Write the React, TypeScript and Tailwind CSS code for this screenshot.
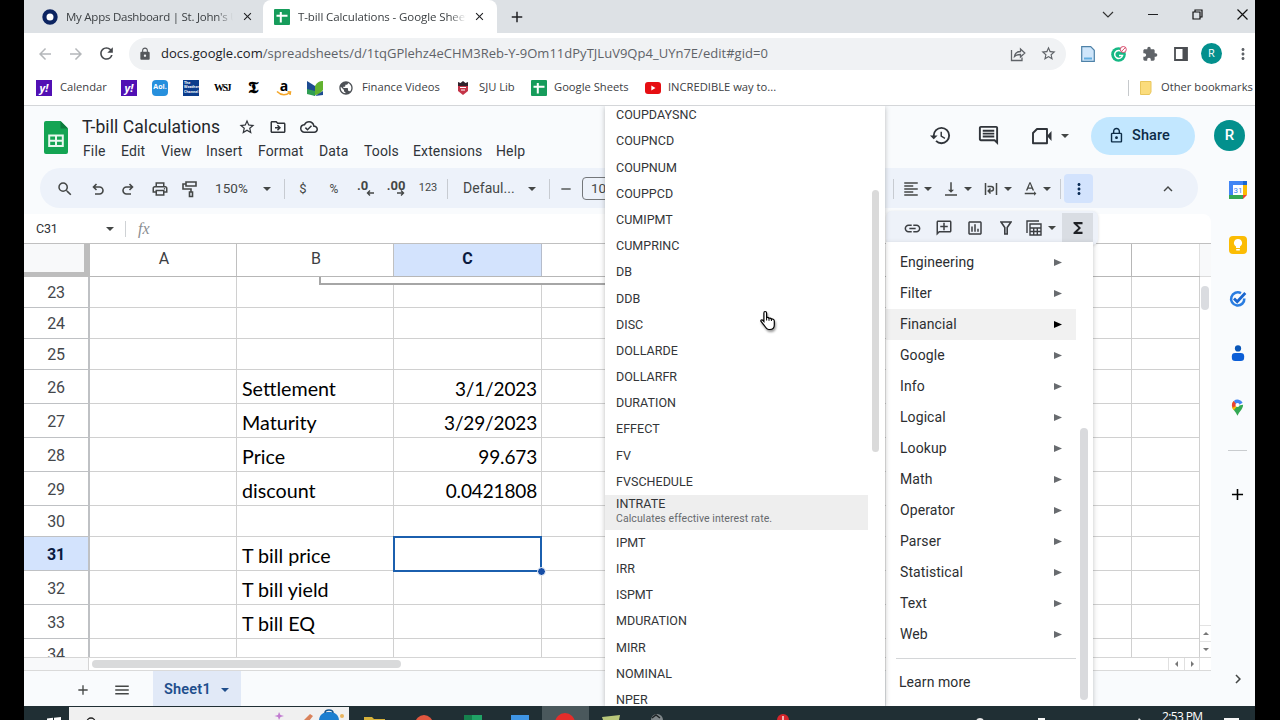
import type { ReactNode } from "react";
import {
  MdAdd,
  MdArrowBack,
  MdArrowForward,
  MdClose,
  MdExtension,
  MdFormatAlignLeft,
  MdFunctions,
  MdHistory,
  MdKeyboardArrowDown,
  MdKeyboardArrowRight,
  MdKeyboardArrowUp,
  MdLink,
  MdLock,
  MdMenu,
  MdMoreVert,
  MdOutlineAddComment,
  MdOutlineAssessment,
  MdOutlineCloudDone,
  MdOutlineComment,
  MdOutlineDriveFileMove,
  MdOutlineLock,
  MdOutlinePrint,
  MdPublic,
  MdRefresh,
  MdRemove,
  MdSearch,
  MdStarBorder,
  MdTextRotationNone,
  MdVerticalAlignBottom,
} from "react-icons/md";

const menus = [
  { label: "File", width: "w-[38px]" },
  { label: "Edit", width: "w-[40px]" },
  { label: "View", width: "w-[45px]" },
  { label: "Insert", width: "w-[52px]" },
  { label: "Format", width: "w-[61px]" },
  { label: "Data", width: "w-[45px]" },
  { label: "Tools", width: "w-[49px]" },
  { label: "Extensions", width: "w-[83px]" },
  { label: "Help", width: "w-[40px]" },
];

const rows = [
  { n: 23, h: "h-[31px]" },
  { n: 24, h: "h-[31px]" },
  { n: 25, h: "h-[31px]" },
  { n: 26, h: "h-[34px]", b: "Settlement", c: "3/1/2023" },
  { n: 27, h: "h-[34px]", b: "Maturity", c: "3/29/2023" },
  { n: 28, h: "h-[34px]", b: "Price", c: "99.673" },
  { n: 29, h: "h-[34px]", b: "discount", c: "0.0421808" },
  { n: 30, h: "h-[31px]" },
  { n: 31, h: "h-[34px]", b: "T bill price", active: true },
  { n: 32, h: "h-[34px]", b: "T bill yield" },
  { n: 33, h: "h-[34px]", b: "T bill EQ" },
  { n: 34, h: "h-[31px]" },
];

const functionsAbove = [
  "COUPDAYSNC",
  "COUPNCD",
  "COUPNUM",
  "COUPPCD",
  "CUMIPMT",
  "CUMPRINC",
  "DB",
  "DDB",
  "DISC",
  "DOLLARDE",
  "DOLLARFR",
  "DURATION",
  "EFFECT",
  "FV",
  "FVSCHEDULE",
];

const functionsBelow = ["IPMT", "IRR", "ISPMT", "MDURATION", "MIRR", "NOMINAL", "NPER"];

const categories = [
  "Engineering",
  "Filter",
  "Financial",
  "Google",
  "Info",
  "Logical",
  "Lookup",
  "Math",
  "Operator",
  "Parser",
  "Statistical",
  "Text",
  "Web",
];

function Slot({ w, children }: { w: string; children: ReactNode }) {
  return <div className={`flex shrink-0 items-center justify-center ${w}`}>{children}</div>;
}

function Caret({ className = "text-[#444746]" }: { className?: string }) {
  return (
    <svg viewBox="0 0 8 4" className={`h-1 w-2 shrink-0 ${className}`}>
      <path d="M0 0h8L4 4z" fill="currentColor" />
    </svg>
  );
}

function Divider() {
  return <div className="h-5 w-px shrink-0 bg-[#c7cbd1]" />;
}

function SheetsFavicon() {
  return (
    <svg viewBox="0 0 16 16" className="size-4 shrink-0">
      <rect width="16" height="16" rx="1" fill="#169c5b" />
      <path d="M2.5 6.7h11M6.8 3v10.5" stroke="#fff" strokeWidth="2" />
    </svg>
  );
}

function YahooIcon() {
  return (
    <div className="flex size-4 shrink-0 items-center justify-center bg-[#5110b4] text-[11px] leading-none font-bold text-white italic">
      y!
    </div>
  );
}

function TabStrip() {
  return (
    <div className="flex h-[33px] shrink-0 bg-[#dde1e5] text-[11.500px] text-[#3c4043]">
      <div className="flex w-[239px] items-center pl-[18px]">
        <svg viewBox="0 0 16 16" className="size-4 shrink-0">
          <circle cx="8" cy="8" r="5.600" fill="#fff" stroke="#0c2461" strokeWidth="4.200" />
        </svg>
        <div className="ml-2 w-[167px] overflow-hidden mask-r-from-90% tracking-[-0.250px] whitespace-nowrap">
          My Apps Dashboard | St. John's U
        </div>
        <MdClose className="ml-2 size-[13px] text-[#202124]" />
      </div>
      <div className="flex w-[234px] items-center rounded-t-lg bg-white pl-[11px]">
        <SheetsFavicon />
        <div className="ml-2 w-[168px] overflow-hidden mask-r-from-90% tracking-[-0.100px] whitespace-nowrap">
          T-bill Calculations - Google Sheets
        </div>
        <MdClose className="ml-[7px] size-[13px] text-[#202124]" />
      </div>
      <div className="flex flex-1 items-center text-[#202124]">
        <MdAdd className="ml-[11px] size-[18px]" />
        <div className="flex-1" />
        <Slot w="w-[45px] pb-1">
          <svg viewBox="0 0 12 7" className="h-[7px] w-3" fill="none" stroke="#333" strokeWidth="1.200">
            <path d="M1 1l5 5 5-5" />
          </svg>
        </Slot>
        <Slot w="w-[45px] pb-1">
          <div className="h-px w-[10px] bg-[#202124]" />
        </Slot>
        <Slot w="w-[45px] pb-1">
          <svg viewBox="0 0 11 11" className="size-[11px]" fill="none" stroke="#111" strokeWidth="1.200">
            <path d="M1 3h7v7H1zM3 3V1h7v7H8" />
          </svg>
        </Slot>
        <Slot w="w-[35px] pb-1 pl-[9px]">
          <svg viewBox="0 0 11 11" className="size-[11px]" stroke="#111" strokeWidth="1.200">
            <path d="M.5.5l10 10M10.500.5l-10 10" />
          </svg>
        </Slot>
      </div>
    </div>
  );
}

function AddressBar() {
  return (
    <div className="flex h-[37px] shrink-0 items-center bg-white pt-1 pl-[5px] text-[#5f6368]">
      <Slot w="w-[31px]">
        <MdArrowBack className="size-[18px] text-[#b4b7ba]" />
      </Slot>
      <Slot w="w-[31px]">
        <MdArrowForward className="size-[18px] text-[#b4b7ba]" />
      </Slot>
      <Slot w="w-[31px]">
        <MdRefresh className="size-[19px] text-[#46494d]" />
      </Slot>
      <div className="ml-[7px] flex h-8 w-[937px] shrink-0 items-center rounded-full bg-[#f0f2f4] pl-[9px]">
        <MdLock className="size-[14px] text-[#55585c]" />
        <div className="ml-[9px] w-[620px] text-[13px] tracking-[0.020px] whitespace-nowrap">
          <span className="text-[#202124]">docs.google.com</span>
          /spreadsheets/d/1tqGPlehz4eCHM3Reb-Y-9Om11dPyTJLuV9Qp4_UYn7E/edit#gid=0
        </div>
        <div className="flex-1" />
        <Slot w="w-[31px]">
          <svg viewBox="0 0 16 16" className="size-4" fill="none" stroke="#5f6368" strokeWidth="1.300">
            <path d="M1.500 4v10.500h10.500v-3M4.500 10.500c.5-3.500 2.500-5 6-5V3l4.300 4-4.300 4V8.500c-3 0-4.500.5-6 2z" />
          </svg>
        </Slot>
        <Slot w="w-[31px]">
          <MdStarBorder className="size-[17px]" />
        </Slot>
        <div className="w-[2px]" />
      </div>
      <div className="w-[6px] shrink-0" />
      <Slot w="w-[31px]">
        <svg viewBox="0 0 14 16" className="h-4 w-[14px]">
          <path d="M.7.7h9l3.600 3.600v11H.7z" fill="#cfe6fb" stroke="#4e82a8" strokeWidth="1.200" />
          <path d="M3 12.500h8" stroke="#62aee0" strokeWidth="2" />
        </svg>
      </Slot>
      <Slot w="w-[31px]">
        <svg viewBox="0 0 16 16" className="size-4">
          <circle cx="7.500" cy="8.500" r="7.300" fill="#15b884" />
          <path d="M10.500 5.600a4 4 0 1 0 1 4H8" fill="none" stroke="#fff" strokeWidth="1.500" />
          <circle cx="12.300" cy="3.500" r="3" fill="#fff" stroke="#d9486a" />
          <path d="M10.400 5.500l4-4" stroke="#d9486a" />
        </svg>
      </Slot>
      <Slot w="w-[31px]">
        <MdExtension className="size-4" />
      </Slot>
      <Slot w="w-[31px]">
        <svg viewBox="0 0 14 14" className="size-[14px]">
          <path d="M1 1h12v12H1z" fill="#fff" stroke="#4b4e52" strokeWidth="1.800" />
          <path d="M8.500 1H13v12H8.500z" fill="#4b4e52" />
        </svg>
      </Slot>
      <Slot w="w-[31px]">
        <div className="flex size-[21px] items-center justify-center rounded-full bg-[#03908d] text-[11px] text-white">
          R
        </div>
      </Slot>
      <Slot w="w-[31px]">
        <MdMoreVert className="size-[18px]" />
      </Slot>
    </div>
  );
}

function BookmarksBar() {
  return (
    <div className="flex h-9 shrink-0 items-center border-b border-[#d4d6d9] bg-white pl-3 text-[11.200px] whitespace-nowrap text-[#3c4043]">
      <YahooIcon />
      <div className="ml-2 w-[61px]">Calendar</div>
      <YahooIcon />
      <div className="ml-[15px] flex size-4 shrink-0 items-center justify-center rounded-sm bg-[#2790dd] text-[7px] font-bold text-white">
        Aol.
      </div>
      <div className="ml-[15px] flex size-4 shrink-0 flex-col justify-center bg-[#0b3c8c] pl-px text-[3.500px] leading-[4.500px] font-bold text-white">
        <span>The</span>
        <span>Weather</span>
        <span>Channel</span>
      </div>
      <div className="ml-[15px] w-4 font-['Liberation_Serif',serif] text-[10px] font-bold tracking-[-1.500px] text-black">
        WSJ
      </div>
      <div className="ml-[15px] w-4 text-center font-['Liberation_Serif',serif] text-[17px] leading-none font-bold text-black">
        𝕿
      </div>
      <div className="ml-[15px] flex w-4 flex-col items-center font-['Open_Sans',sans-serif] text-[14px] leading-[11px] font-bold text-black">
        a
        <svg viewBox="0 0 16 5" className="h-[5px] w-4" fill="none" stroke="#f4a629" strokeWidth="1.500">
          <path d="M1 .5c4 4 9 4 13 1M11.500.8l3 .2-.5 3" />
        </svg>
      </div>
      <svg viewBox="0 0 16 16" className="ml-[15px] size-4 shrink-0">
        <path d="M0 1l8 5v10L0 11z" fill="#1d4c92" />
        <path d="M0 9l8 2v5l-8-2z" fill="#2f9e54" />
        <path d="M8 6c2-4 5-5 8-5v9c-2 3-5 5-8 5z" fill="#62b22f" />
        <path d="M8 16l8-5v4z" fill="#1d4c92" />
      </svg>
      <MdPublic className="ml-[15px] size-4 shrink-0 text-[#4d5156]" />
      <div className="ml-2 w-[94px]">Finance Videos</div>
      <svg viewBox="0 0 14 14" className="size-[14px] shrink-0">
        <path d="M2 1l2.500 1L7 0l2.500 2L12 1v4H2z" fill="#30222b" />
        <path d="M2 5h10v5l-5 4-5-4z" fill="#c43347" />
        <path d="M4 6.500h6M5 9h4" stroke="#fff" />
      </svg>
      <div className="ml-[9px] w-[52px]">SJU Lib</div>
      <SheetsFavicon />
      <div className="ml-[7px] w-[91px]">Google Sheets</div>
      <svg viewBox="0 0 16 12" className="h-3 w-4 shrink-0">
        <rect width="16" height="12" rx="3" fill="#e60e12" />
        <path d="M6.300 3.500L10.500 6l-4.200 2.500z" fill="#fff" />
      </svg>
      <div className="ml-[7px]">INCREDIBLE way to...</div>
      <div className="flex-1" />
      <div className="h-4 w-px bg-[#c6c9cc]" />
      <svg viewBox="0 0 12 14" className="ml-[11px] h-[14px] w-3">
        <path d="M.5.5h10.500V11l-1.500 2.500H.5z" fill="#fbdc7c" stroke="#e9c65c" />
      </svg>
      <div className="ml-[9px] w-[94px]">Other bookmarks</div>
    </div>
  );
}

function DocHeader() {
  return (
    <div className="flex h-[62px] shrink-0 pl-5 text-[#30343a]">
      <svg viewBox="0 0 24 33" className="mt-[15px] h-[33px] w-6">
        <path d="M2 0h14.500L24 7.500V31a2 2 0 0 1-2 2H2a2 2 0 0 1-2-2V2a2 2 0 0 1 2-2z" fill="#14a453" />
        <path d="M16.500 0L24 7.500h-7.500z" fill="#0c7b3d" />
        <path d="M5.200 14.600h13.600v10.300H5.200zM12 14.600v10.300M5.200 19.700h13.600" fill="none" stroke="#e8f7ee" strokeWidth="2" />
      </svg>
      <div className="ml-[14px] flex w-[480px] flex-col pt-[9px]">
        <div className="flex h-6 items-center">
          <div className="w-[156px] text-[17.500px] tracking-[0.080px] whitespace-nowrap text-[#24272b]">
            T-bill Calculations
          </div>
          <MdStarBorder className="size-[18px]" />
          <MdOutlineDriveFileMove className="ml-[13px] size-[18px]" />
          <MdOutlineCloudDone className="ml-[13px] size-[18px]" />
        </div>
        <div className="flex h-6 items-center pl-px text-[14px] tracking-[0.120px]">
          {menus.map((m) => (
            <div key={m.label} className={`shrink-0 ${m.width}`}>
              {m.label}
            </div>
          ))}
        </div>
      </div>
      <div className="flex-1" />
      <div className="flex h-[59px] items-center">
        <MdHistory className="size-[23px]" />
        <MdOutlineComment className="ml-[25px] size-[23px]" />
        <svg viewBox="0 0 22 20" className="ml-[31px] h-5 w-[22px]" fill="none" stroke="currentColor" strokeWidth="1.900">
          <path d="M6 3h10v14.200H2V7z" strokeLinejoin="round" />
          <path d="M16 10l4.500-5v10z" fill="currentColor" strokeWidth="0" />
        </svg>
        <div className="w-2" />
        <Caret />
        <div className="ml-[22px] flex h-[38px] w-[104px] items-center rounded-full bg-[#c2e7ff] pl-[17px] text-[#0c2c47]">
          <MdOutlineLock className="size-[17px]" />
          <span className="ml-[7px] text-[14.500px] font-medium tracking-[0.100px]">Share</span>
        </div>
        <div className="ml-[19px] flex size-[31px] items-center justify-center rounded-full bg-[#03908d] text-[15px] font-medium text-white">
          R
        </div>
        <div className="w-[10px]" />
      </div>
    </div>
  );
}

function Toolbar() {
  return (
    <div className="ml-4 flex h-10 w-[1158px] shrink-0 items-center rounded-full bg-[#edf2fa] pt-px text-[13.500px] text-[#444746]">
      <div className="w-[9px]" />
      <Slot w="w-8">
        <MdSearch className="size-[18px]" />
      </Slot>
      <Slot w="w-[34px]">
        <svg viewBox="0 0 12 12" className="size-3" fill="none" stroke="currentColor" strokeWidth="1.600">
          <path d="M4.500 1L1.500 4l3 3M1.500 4h6a3.200 3.200 0 0 1 0 7H3" />
        </svg>
      </Slot>
      <Slot w="w-[26px]">
        <svg viewBox="0 0 12 12" className="size-3" fill="none" stroke="currentColor" strokeWidth="1.600">
          <path d="M7.500 1l3 3-3 3M10.500 4h-6a3.200 3.200 0 0 0 0 7H9" />
        </svg>
      </Slot>
      <Slot w="w-[37px]">
        <MdOutlinePrint className="size-[18px]" />
      </Slot>
      <Slot w="w-6">
        <svg viewBox="0 0 16 18" className="h-[18px] w-4" fill="none" stroke="currentColor" strokeWidth="1.600">
          <path d="M4 2h10v4H4zM4 4H1v5h8v3M7.500 12h3v4.500h-3z" />
        </svg>
      </Slot>
      <div className="ml-[13px] w-[35px] tracking-[0.100px]">150%</div>
      <Slot w="w-[34px]">
        <Caret />
      </Slot>
      <Divider />
      <Slot w="w-9">
        <span className="text-[13px]">$</span>
      </Slot>
      <Slot w="w-[26px]">
        <span className="text-[12px]">%</span>
      </Slot>
      <Slot w="w-9">
        <div className="mr-[5px] flex flex-col items-end text-[13px] leading-[9px] font-bold">
          .0
          <svg viewBox="0 0 8 6" className="-mr-1.5 h-1.5 w-2" fill="none" stroke="currentColor" strokeWidth="1.400">
            <path d="M8 3H1.500M4 .5L1.500 3 4 5.500" />
          </svg>
        </div>
      </Slot>
      <Slot w="w-[26px]">
        <div className="flex flex-col items-end text-[13px] leading-[9px] font-bold">
          .00
          <svg viewBox="0 0 8 6" className="h-1.5 w-2" fill="none" stroke="currentColor" strokeWidth="1.400">
            <path d="M0 3h6.500M4 .5L6.500 3 4 5.500" />
          </svg>
        </div>
      </Slot>
      <Slot w="w-[38px]">
        <span className="text-[11px]">123</span>
      </Slot>
      <Divider />
      <div className="ml-[15px] w-[52px] text-[14px] tracking-[0.050px]">Defaul...</div>
      <Slot w="w-[34px]">
        <Caret />
      </Slot>
      <Divider />
      <Slot w="w-8">
        <MdRemove className="size-4" />
      </Slot>
      <div className="flex h-[23px] w-10 items-center rounded-sm border border-[#74777a] pl-2">10</div>
      <div className="flex-1" />
      <Divider />
      <div className="ml-[7px] flex">
        {[
          <MdFormatAlignLeft className="size-[18px]" />,
          <MdVerticalAlignBottom className="size-[18px]" />,
          <svg viewBox="0 0 14 14" className="size-[14px]" fill="none" stroke="currentColor" strokeWidth="1.500">
            <path d="M1.500 1v12M12.500 1v12M3.500 4.500h3.700a2.200 2.200 0 0 1 0 4.500H4.500M6.500 6.500L4.200 9l2.300 2.500" />
          </svg>,
          <MdTextRotationNone className="size-[18px]" />,
        ].map((icon, i) => (
          <div key={i} className="flex w-[39.700px] items-center">
            <Slot w="w-5">{icon}</Slot>
            <div className="w-[3px]" />
            <Caret />
          </div>
        ))}
      </div>
      <Divider />
      <div className="ml-[3px] flex h-[29px] w-[29px] items-center justify-center rounded-sm bg-[#d3e3fd]">
        <MdMoreVert className="size-[18px] text-[#0b2c55]" />
      </div>
      <MdKeyboardArrowUp className="mr-[21px] ml-[66px] size-[18px]" />
    </div>
  );
}

function FormulaBar() {
  return (
    <div className="mt-[6px] flex h-[29px] w-[1187px] shrink-0 items-center rounded-tr-lg bg-white pt-px pl-3 text-[12.500px] text-[#303236]">
      <div className="w-[70px] tracking-[-0.200px]">C31</div>
      <Caret />
      <div className="mr-3 ml-[11px] h-4 w-px bg-[#cfd2d5]" />
      <span className="font-['Liberation_Serif',serif] text-[16px] leading-none text-[#8b8e91] italic">fx</span>
    </div>
  );
}

function ColumnHeaders() {
  return (
    <div className="flex h-[34px] w-[1187px] shrink-0 border-t border-[#c0c0c0] bg-white text-[16px] text-[#3c4043]">
      <div className="h-full w-[66px] shrink-0 border-r-[6px] border-b-[5px] border-[#bdbdbd] bg-[#f8f9fa]" />
      <div className="flex w-[1110px] border-b border-[#b7b7b7]">
        <Slot w="w-[147px] border-r border-[#c0c0c0] pb-[3px] pl-0.5">A</Slot>
        <Slot w="w-[157px] border-r border-[#c0c0c0] pb-[3px] pl-0.5">B</Slot>
        <div className="flex w-[148px] items-center justify-center border-r border-[#b5bccb] bg-[#d3e3fd] pb-[3px] font-bold text-[#0a1a3f]">
          C
        </div>
        <div className="w-[590px] border-r border-[#b7b7b7]" />
        <div className="flex-1 border-r border-[#e0e0e0]" />
      </div>
      <div className="flex-1 border-b border-[#dcdcdc] bg-[#f8f9fa]" />
    </div>
  );
}

function Grid() {
  return (
    <div className="relative flex h-[381px] w-[1187px] shrink-0 overflow-hidden border-b border-[#d5d5d5] bg-white">
      <div className="w-[1176px]">
        {rows.map((r) => (
          <div key={r.n} className={`flex ${r.h}`}>
            <div
              className={`flex w-[66px] items-center justify-center border-r-2 border-b border-[#bfc1c4] pt-0.5 text-[16px] tracking-[-0.200px] ${
                r.active ? "bg-[#d3e3fd] font-bold text-[#0a1a3f]" : "text-[#44474b]"
              }`}
            >
              {r.n}
            </div>
            <div className="w-[147px] border-r border-b border-[#d0d0d0]" />
            <div className="flex w-[157px] items-end border-r border-b border-[#d0d0d0] pb-px pl-[5px] font-['Lato',sans-serif] text-[19.700px] leading-[27px] text-black">
              {r.b}
            </div>
            <div className="flex w-[148px] items-end justify-end border-r border-b border-[#d0d0d0] pr-1 pb-px font-['Lato',sans-serif] text-[19px] leading-[27px] tracking-[-0.150px] text-black">
              {r.c}
            </div>
            <div className="w-[590px] border-r border-b border-[#d0d0d0]" />
            <div className="flex-1 border-r border-b border-[#d0d0d0]" />
          </div>
        ))}
      </div>
      <div className="flex flex-1 flex-col items-center justify-between bg-white pt-[9px]">
        <div className="mr-px h-6 w-2 rounded-full bg-[#dadce0]" />
        <div className="flex w-full flex-col items-center text-[#777]">
          <div className="flex h-4 w-full items-center justify-center border-t border-[#e3e3e3]">
            <svg viewBox="0 0 6 3" className="h-[3px] w-1.5">
              <path d="M0 3h6L3 0z" fill="currentColor" />
            </svg>
          </div>
          <div className="flex h-4 w-full items-center justify-center border-t border-[#e3e3e3]">
            <svg viewBox="0 0 6 3" className="h-[3px] w-1.5">
              <path d="M0 0h6L3 3z" fill="currentColor" />
            </svg>
          </div>
        </div>
      </div>

      {/* bottom left corner of a chart floating over the cells */}
      <div className="absolute top-0 left-[295px] h-[8px] w-[320px] border-b-2 border-l-2 border-[#a6a6a6] bg-white" />

      {/* selected cell */}
      <div className="absolute top-[259px] left-[369px] h-[36px] w-[149px] border-2 border-[#1b5fae]">
        <div className="absolute -right-[6px] -bottom-[6px] size-[9px] rounded-full border border-white bg-[#174ea6]" />
      </div>
    </div>
  );
}

function SheetTabs() {
  return (
    <>
      <div className="flex h-[13px] w-[1187px] shrink-0 items-center border-b border-[#dadada] bg-white">
        <div className="h-full w-[65px] border-r border-[#d5d5d5] bg-[#f8f9fa]" />
        <div className="ml-[3px] h-2 w-[309px] rounded-full bg-[#d9dadb]" />
        <div className="flex-1" />
        <div className="flex h-3 w-4 items-center justify-center border-l border-[#e0e0e0]">
          <svg viewBox="0 0 3 6" className="h-1.5 w-[3px]">
            <path d="M3 0v6L0 3z" fill="#777" />
          </svg>
        </div>
        <div className="flex h-3 w-4 items-center justify-center border-x border-[#e0e0e0]">
          <svg viewBox="0 0 3 6" className="h-1.5 w-[3px]">
            <path d="M0 0v6l3-3z" fill="#777" />
          </svg>
        </div>
        <div className="w-[11px]" />
      </div>
      <div className="flex h-[35px] shrink-0 items-center pl-[51px] text-[#444746]">
        <MdAdd className="mt-0.5 size-4" />
        <MdMenu className="mt-0.5 ml-[22px] size-[18px]" />
        <div className="ml-[22px] flex h-full w-[88px] items-center bg-[#e1e9f7] pt-0.5 pl-[11px] text-[14.500px] font-semibold text-[#1f4e8c]">
          <div className="w-[57px] tracking-[0.200px]">Sheet1</div>
          <Caret className="text-[#1f4e8c]" />
        </div>
      </div>
    </>
  );
}

function SidePanel() {
  return (
    <div className="absolute top-[75px] right-0 flex w-[35px] flex-col items-center">
      <svg viewBox="0 0 18 18" className="h-[18px] w-[18px]">
        <path d="M0 0h14v4H4v10H0z" fill="#4285f4" />
        <path d="M14 0h4v4h-4z" fill="#1967d2" />
        <path d="M14 4h4v10h-4z" fill="#fbbc04" />
        <path d="M0 14h14v4H0z" fill="#34a853" />
        <path d="M14 14h4l-4 4z" fill="#ea4335" />
        <path d="M4 4h10v10H4z" fill="#fff" />
        <text x="9" y="12" textAnchor="middle" fontSize="8" fontFamily="Roboto" fill="#4285f4">
          31
        </text>
      </svg>
      <div className="mt-[37px] flex size-[18px] items-center justify-center rounded-sm bg-[#fbbc04]">
        <svg viewBox="0 0 10 12" className="h-3 w-[10px]">
          <path d="M5 0a4 4 0 0 1 2 7.500V9H3V7.500A4 4 0 0 1 5 0zM3.200 10h3.600v1.500H3.200z" fill="#fff" />
        </svg>
      </div>
      <svg viewBox="0 0 18 18" className="mt-9 size-[18px]" fill="none">
        <path d="M15.300 8.500A6.600 6.600 0 1 1 12 3.200" stroke="#2a7de1" strokeWidth="2.600" />
        <path d="M5 8.500l3.200 3.200L16.300 3" stroke="#1a66cf" strokeWidth="2.800" />
      </svg>
      <svg viewBox="0 0 14 18" className="mt-[37px] h-[17px] w-[14px]">
        <circle cx="7" cy="3.600" r="3.300" fill="#0b57b8" />
        <rect x=".5" y="8.500" width="13" height="8.500" rx="3.500" fill="#0b5ed7" />
      </svg>
      <svg viewBox="0 0 14 18" className="mt-[37px] h-[17px] w-[13px]">
        <path d="M7 18C5.500 13.500 1 11 1 6.500L7 7l6-1c0 5-4.500 7.500-6 12z" fill="#34a853" />
        <path d="M1 7a6 6 0 0 1 2-5l4 5-4 5C1.800 10.500 1 9 1 7z" fill="#fbbc04" />
        <path d="M1 6.500C1 4.500 1.800 3 3 2l4 4-4.500 3C1.500 8.500 1 7.500 1 6.500z" fill="#ea4335" />
        <path d="M3 2a6 6 0 0 1 9.500 2L7 7z" fill="#4285f4" />
        <circle cx="7" cy="6.300" r="2.200" fill="#fff" />
      </svg>
      <div className="mt-[34px] h-px w-[19px] bg-[#c9cccf]" />
      <MdAdd className="mt-[34px] size-[19px] text-black" />
      <MdKeyboardArrowRight className="mt-[166px] size-[18px] text-[#444746]" />
    </div>
  );
}

function OverflowToolbar() {
  return (
    <div className="absolute top-[105px] left-[862px] flex h-[34px] w-[212px] items-center rounded-md bg-[#eef2f9] text-[#3c3f43] shadow-[0_1px_3px_rgba(60,64,67,0.2)]">
      <div className="w-[10px]" />
      <Slot w="w-8">
        <MdLink className="size-[19px]" />
      </Slot>
      <Slot w="w-[31px]">
        <MdOutlineAddComment className="size-[18px] -scale-x-100" />
      </Slot>
      <Slot w="w-8">
        <MdOutlineAssessment className="size-[18px]" />
      </Slot>
      <Slot w="w-[29px]">
        <svg viewBox="0 0 12 14" className="h-[14px] w-3" fill="none" stroke="currentColor" strokeWidth="1.600">
          <path d="M1 1h10L7.200 6.500V13H4.800V6.500z" />
        </svg>
      </Slot>
      <Slot w="w-[28px]">
        <svg viewBox="0 0 16 16" className="size-4" fill="none" stroke="currentColor" strokeWidth="1.400">
          <path d="M4 4h11v11H4zM4 8h11M4 11.500h11M7.700 8v7M11.300 8v7M1 13V1h12" />
        </svg>
      </Slot>
      <Caret />
      <div className="ml-1.5 flex h-[30px] w-[31px] items-center justify-center bg-[#d9dde3]">
        <MdFunctions className="size-[18px] text-[#1f2125]" />
      </div>
    </div>
  );
}

function CategoryMenu() {
  return (
    <div className="absolute top-[136px] left-[862px] h-[464px] w-[207px] bg-white pt-[4.800px] text-[14px] tracking-[0.080px] text-[#2c2e31] shadow-[0_2px_5px_rgba(60,64,67,0.3)]">
      {categories.map((name) => {
        const open = name === "Financial";
        return (
          <div
            key={name}
            className={`flex h-[31.060px] w-[190px] items-center justify-between pr-[14px] pl-[14px] ${open ? "bg-[#f1f1f1]" : ""}`}
          >
            {name}
            <svg viewBox="0 0 8 7" className={`h-[7px] w-2 ${open ? "text-black" : "text-[#686b6f]"}`}>
              <path d="M0 0v7l8-3.500z" fill="currentColor" />
            </svg>
          </div>
        );
      })}
      <div className="mt-[8px] ml-[10px] h-px w-[180px] bg-[#d4d6d8]" />
      <div className="mt-[13px] pl-[13px]">Learn more</div>
      <div className="absolute top-[186px] right-[5px] h-[272px] w-2 rounded-full bg-[#d9dadd]" />
    </div>
  );
}

function FunctionMenu() {
  return (
    <div className="absolute top-0 left-[581px] h-[600px] w-[280px] overflow-hidden bg-white text-[12.500px] text-[#333538] shadow-[0_1px_5px_rgba(60,64,67,0.35)]">
      <div className="-mt-[3.400px]">
        {functionsAbove.map((name) => (
          <div key={name} className="flex h-[26.180px] items-center pl-[11px] tracking-[0.030px]">
            {name}
          </div>
        ))}
        <div className="flex h-[35px] w-[263px] flex-col bg-[#eee] pt-px pl-[11px]">
          <div className="leading-[16px]">INTRATE</div>
          <div className="text-[10.500px] leading-[14px] tracking-[0.080px] text-[#66696d]">
            Calculates effective interest rate.
          </div>
        </div>
        {functionsBelow.map((name) => (
          <div key={name} className="flex h-[26.180px] items-center pl-[11px] tracking-[0.030px]">
            {name}
          </div>
        ))}
      </div>
      <div className="absolute top-[84px] right-[6px] h-[262px] w-[7px] rounded-full bg-[#dadada]" />
    </div>
  );
}

function Pointer() {
  return (
    <svg viewBox="0 0 17 21" className="absolute top-[204px] left-[736px] h-[21px] w-[17px] drop-shadow-[1px_2px_1px_rgba(0,0,0,0.4)]">
      <path
        d="M5 1.500c1 0 1.600.6 1.600 1.500v4.500c1.200-.5 2 0 2.400.7 1-.3 2 0 2.300.8 1-.2 3 .2 3 2V15c0 3-2 4.500-4.500 4.500H9c-2.500 0-3.500-2-5-4.500L1 11.500c-.8-1.500 1-2 2-1l.9 1V3c0-.9.400-1.500 1.100-1.500z"
        fill="#fff"
        stroke="#000"
        strokeWidth="1.200"
      />
      <path d="M6.600 7v3.500M9 8.200v2.600M11.400 9v2" stroke="#000" />
    </svg>
  );
}

function Taskbar() {
  return (
    <div className="flex h-[14px] shrink-0 overflow-hidden bg-[#202f34]">
      <div className="flex w-[45px] items-end justify-center pl-[14px]">
        <svg viewBox="0 0 14 3" className="h-[3px] w-[14px]">
          <path d="M0 1.500l6-.7V3H0zM7 .7L14 0v3H7z" fill="#fff" />
        </svg>
      </div>
      <svg viewBox="0 0 280 14" className="mt-px h-[14px] w-[280px] shrink-0 bg-[#f0f0f0]">
        <circle cx="22" cy="15" r="4" fill="none" stroke="#222" strokeWidth="1.300" />
        <path d="M210 5l1.500 3 3.500 1-3.500 1-1.500 3-1-3-3.500-1 3.500-1z" fill="#c17bd0" />
        <path d="M235 13l6-6 3 2-4 5z" fill="#d9825b" />
        <path d="M250 14c0-6 4-9 10-9s10 3 10 9z" fill="#1b7ed0" />
        <path d="M256 6c0-4 8-4 8 0" fill="none" stroke="#15558f" strokeWidth="1.500" />
        <circle cx="273" cy="9" r="2" fill="#e8b35b" />
      </svg>
      <svg viewBox="349 0 906 14" className="h-[14px] w-[906px] shrink-0">
        <path d="M364 11h8l2 2h11v2h-21z" fill="#d6b13a" />
        <circle cx="424" cy="18" r="9" fill="#e2573f" />
        <path d="M464 9h18v5h-18z" fill="#20a366" />
        <path d="M464 9h8v5h-8z" fill="#16814d" />
        <path d="M511 9h18v5h-18z" fill="#3f95e4" />
        <path d="M542 0h47v14h-47z" fill="#4a585c" />
        <circle cx="565" cy="17" r="10" fill="#e52d2a" />
        <path d="M602 11l18-2-1 5h-16z" fill="#b8c77a" />
        <circle cx="657" cy="14" r="6" fill="#7f878a" />
        <path d="M652 12l4-3 4 3" fill="none" stroke="#1c2224" strokeWidth="1.500" />
        <circle cx="783" cy="14" r="6" fill="#d6252b" />
        <path d="M783 10v4" stroke="#fff" strokeWidth="1.300" />
        <circle cx="980" cy="16" r="4" fill="#e8e8e8" />
        <path d="M1038 12h7v2h-7zM1224 12h15v2h-15z" fill="#f5f5f5" />
        <path d="M1139 12l2 2h-3z" fill="#ddd" />
        <text x="1162" y="14.500" fontSize="12" fontFamily="Open Sans" fill="#fff" textLength="41">
          2:53 PM
        </text>
      </svg>
    </div>
  );
}

export default function App() {
  return (
    <div className="h-[720px] w-[1280px] overflow-hidden bg-black pl-6">
      <div className="flex h-full w-[1231px] flex-col overflow-hidden bg-white font-['Open_Sans',sans-serif]">
        <TabStrip />
        <AddressBar />
        <BookmarksBar />
        <div className="relative flex h-[600px] shrink-0 flex-col overflow-hidden bg-[#f9fbfd] font-['Roboto',sans-serif]">
          <DocHeader />
          <Toolbar />
          <FormulaBar />
          <ColumnHeaders />
          <Grid />
          <SheetTabs />
          <SidePanel />
          <OverflowToolbar />
          <CategoryMenu />
          <FunctionMenu />
          <Pointer />
        </div>
        <Taskbar />
      </div>
    </div>
  );
}
